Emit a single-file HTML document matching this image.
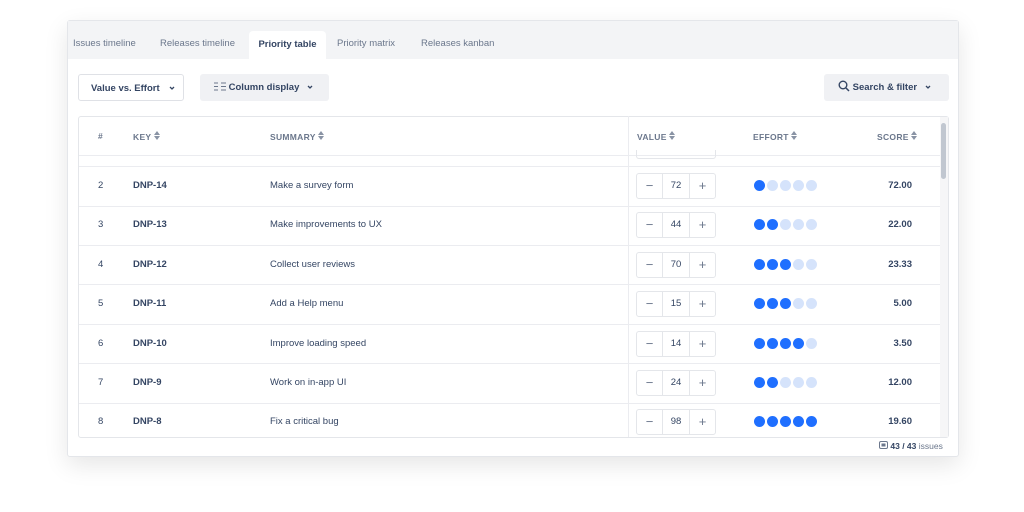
<!DOCTYPE html><html><head><style>
*{margin:0;padding:0;box-sizing:border-box}
body{width:1024px;height:512px;background:#fff;font-family:"Liberation Sans",sans-serif;color:#344563;position:relative;overflow:hidden}
.card{position:absolute;left:67px;top:20px;width:892px;height:437px;background:#fff;border:1px solid #e4e6ea;border-radius:3px;box-shadow:0 8px 24px rgba(0,0,0,.10)}
.tabs{position:absolute;left:0;top:0;width:890px;height:38px;background:#f3f4f6}
.tab{position:absolute;top:17px;font-size:9.5px;color:#6b778c}
.act{position:absolute;left:181px;top:10px;width:77px;height:28px;background:#fff;border-radius:4px 4px 0 0;font-size:9.5px;font-weight:bold;color:#344563;text-align:center;line-height:28px}
.btn{position:absolute;height:27px;border-radius:3px;font-size:9.5px;font-weight:bold;color:#344563;line-height:27px}
.a{position:absolute;font-size:9.5px}
.hd{position:absolute;top:131px;font-size:8.5px;font-weight:bold;color:#6b778c;letter-spacing:.3px}
.ab{position:absolute}
</style></head><body>
<div class="card">
<div class="tabs"></div>
<div class="tab" style="left:5px">Issues timeline</div>
<div class="tab" style="left:92px">Releases timeline</div>
<div class="act">Priority table</div>
<div class="tab" style="left:269px">Priority matrix</div>
<div class="tab" style="left:353px">Releases kanban</div>
</div>
<div class="btn" style="left:78px;top:74px;width:106px;border:1px solid #dfe1e6;padding-left:12px">Value vs. Effort <svg width="8" height="6" viewBox="0 0 8 6" style="margin-left:6px"><path d="M2 2l2 2 2-2" stroke="#344563" stroke-width="1.3" fill="none"/></svg></div>
<div class="btn" style="left:200px;top:74px;width:129px;background:#f0f1f4;padding-left:14px"><svg width="12" height="9" viewBox="0 0 12 9" style="vertical-align:-1px"><path d="M0 1h4M0 4.5h4M0 8h4M7 1h5M7 4.5h5M7 8h5" stroke="#6b778c" stroke-width="1"/></svg> Column display <svg width="8" height="6" viewBox="0 0 8 6" style="margin-left:4px"><path d="M2 2l2 2 2-2" stroke="#344563" stroke-width="1.3" fill="none"/></svg></div>
<div class="btn" style="left:824px;top:74px;width:125px;background:#f0f1f4;padding-left:14px"><svg width="12" height="12" viewBox="0 0 12 12" style="vertical-align:-2px"><circle cx="5" cy="5" r="3.8" fill="none" stroke="#344563" stroke-width="1.4"/><path d="M8 8l3 3" stroke="#344563" stroke-width="1.5"/></svg> Search &amp; filter <svg width="8" height="6" viewBox="0 0 8 6" style="margin-left:4px"><path d="M2 2l2 2 2-2" stroke="#344563" stroke-width="1.3" fill="none"/></svg></div>
<div class="ab" style="left:78px;top:116px;width:871px;height:322px;border:1px solid #e4e6ea;border-radius:3px"></div>
<div class="ab" style="left:628px;top:116px;width:1px;height:321px;background:#ebecf0"></div>
<div class="ab" style="left:79px;top:155px;width:861px;height:1px;background:#ebecf0"></div>
<div class="ab" style="left:79px;top:166px;width:861px;height:1px;background:#ebecf0"></div>
<div class="ab" style="left:940px;top:117px;width:8px;height:320px;background:#f6f6f7"></div>
<div class="ab" style="left:941px;top:123px;width:5px;height:56px;background:#c1c7d0;border-radius:3px"></div>
<div class="ab" style="left:636px;top:150px;width:80px;height:9px;border:1px solid #e4e6ea;border-top:none;border-radius:0 0 3px 3px"></div>
<div class="hd" style="left:98px">#</div>
<div class="hd" style="left:133px">KEY <svg class="srt" width="6" height="9" viewBox="0 0 6 9"><path d="M0 4L3 0 6 4zM0 5l3 4 3-4z" fill="#8993a4"/></svg></div>
<div class="hd" style="left:270px">SUMMARY <svg width="6" height="9" viewBox="0 0 6 9"><path d="M0 4L3 0 6 4zM0 5l3 4 3-4z" fill="#8993a4"/></svg></div>
<div class="hd" style="left:637px">VALUE <svg width="6" height="9" viewBox="0 0 6 9"><path d="M0 4L3 0 6 4zM0 5l3 4 3-4z" fill="#8993a4"/></svg></div>
<div class="hd" style="left:753px">EFFORT <svg width="6" height="9" viewBox="0 0 6 9"><path d="M0 4L3 0 6 4zM0 5l3 4 3-4z" fill="#8993a4"/></svg></div>
<div class="hd" style="left:877px">SCORE <svg width="6" height="9" viewBox="0 0 6 9"><path d="M0 4L3 0 6 4zM0 5l3 4 3-4z" fill="#8993a4"/></svg></div>
<div id="rows"></div>
<div class="a" style="left:879px;top:441px;font-size:8.5px;color:#6b778c"><svg width="9" height="9" viewBox="0 0 9 9" style="vertical-align:-1px"><rect x="0.5" y="0.5" width="8" height="7" rx="1.5" fill="none" stroke="#6b778c"/><rect x="2.5" y="2.5" width="4" height="3" fill="#6b778c"/></svg> <b style="color:#344563">43 / 43</b> issues</div>
<script>
var d=[[2,14,"Make a survey form",72,1,"72.00"],[3,13,"Make improvements to UX",44,2,"22.00"],[4,12,"Collect user reviews",70,3,"23.33"],[5,11,"Add a Help menu",15,3,"5.00"],[6,10,"Improve loading speed",14,4,"3.50"],[7,9,"Work on in-app UI",24,2,"12.00"],[8,8,"Fix a critical bug",98,5,"19.60"]];
var h="";d.forEach(function(r,i){var c=186+i*39.4;var t=c-6;
h+='<div class="a" style="left:98px;top:'+t+'px">'+r[0]+'</div><div class="a" style="left:133px;top:'+t+'px;font-weight:bold">DNP-'+r[1]+'</div><div class="a" style="left:270px;top:'+t+'px">'+r[2]+'</div>';
h+='<div class="ab" style="left:636px;top:'+(c-13)+'px;width:80px;height:26px;border:1px solid #e4e6ea;border-radius:3px;display:flex;font-size:9.5px;line-height:24px;text-align:center;color:#6b778c"><div style="width:26px;border-right:1px solid #e4e6ea;font-size:13px">&minus;</div><div style="width:27px;border-right:1px solid #e4e6ea;color:#344563">'+r[3]+'</div><div style="flex:1;font-size:13px">+</div></div>';
for(var k=0;k<5;k++)h+='<div class="ab" style="left:'+(754+k*13)+'px;top:'+(c-6)+'px;width:11px;height:11px;border-radius:50%;background:'+(k<r[4]?'#1f6fff':'#d5e3fb')+'"></div>';
h+='<div class="a" style="left:860px;width:52px;text-align:right;top:'+t+'px;font-weight:bold">'+r[5]+'</div>';
if(i<6)h+='<div class="ab" style="left:79px;top:'+(c+19.5)+'px;width:861px;height:1px;background:#ebecf0"></div>';});
document.getElementById("rows").innerHTML=h;
</script>
</body></html>
